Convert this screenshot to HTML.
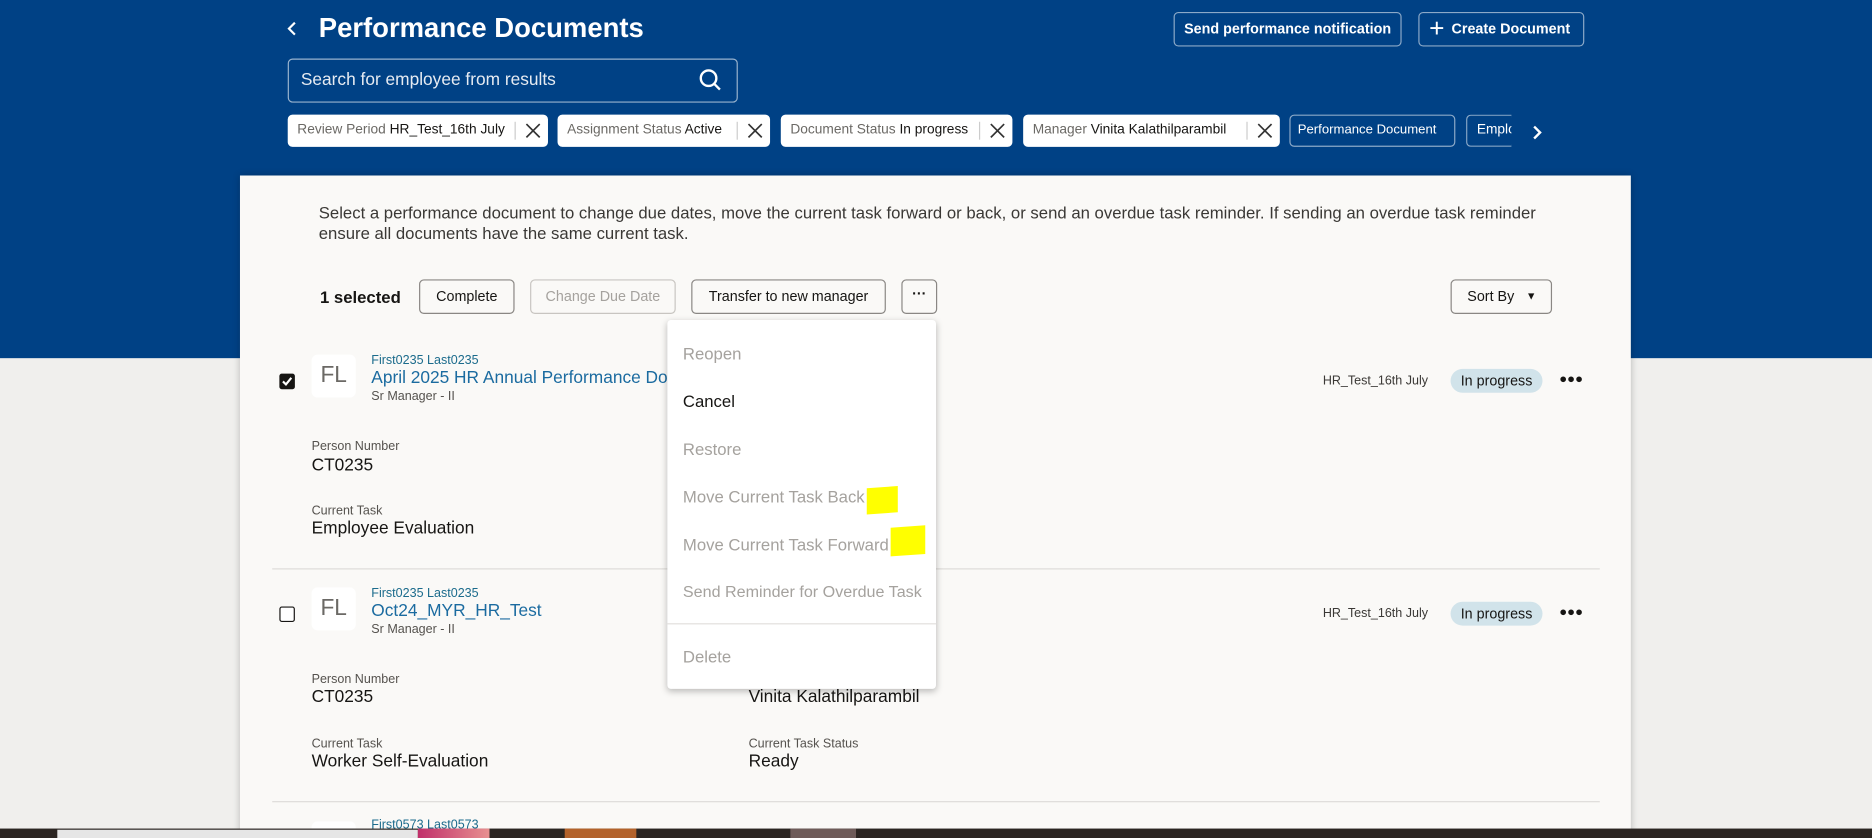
<!DOCTYPE html>
<html><head><meta charset="utf-8"><style>
html,body{margin:0;padding:0;width:1872px;height:838px;overflow:hidden;background:#f0efed;font-family:"Liberation Sans",sans-serif;}
#w{position:absolute;left:0;top:0;width:1568px;height:702px;transform:scale(1.19388);transform-origin:0 0;background:#f0efed;overflow:hidden;}
.a{position:absolute;white-space:nowrap;}
.blue{position:absolute;left:0;top:0;width:1568px;height:300px;background:#004185;}
.card{position:absolute;left:201px;top:147px;width:1165px;height:560px;background:#faf9f7;box-shadow:0 0 6px rgba(0,0,0,.25);}
.hbtn{position:absolute;top:10px;height:29px;border:1px solid rgba(255,255,255,.55);border-radius:4px;color:#fff;font-size:12px;font-weight:bold;line-height:27px;box-sizing:border-box;text-align:center;}
.chip{position:absolute;top:96px;height:27px;background:#fff;border-radius:4px;font-size:11.5px;line-height:27px;padding-left:8px;box-sizing:border-box;color:#161513;overflow:hidden;}
.chip .l{color:#6b6965}
.chip .x{position:absolute;right:6px;top:7px;width:13px;height:13px;}
.chip .sep{position:absolute;top:6px;width:1px;height:15px;background:#ccc;}
.ochip{position:absolute;top:96px;height:27px;border:1px solid rgba(255,255,255,.55);border-radius:4px;color:#fff;font-size:11.5px;line-height:25px;padding:0 8px;box-sizing:border-box;overflow:hidden;}
.btn{position:absolute;top:234px;height:29px;border:1px solid #8a8784;border-radius:4px;background:#faf9f7;font-size:12px;line-height:27px;text-align:center;box-sizing:border-box;color:#161513;}
.lab{font-size:10.5px;color:#55524e;}
.val{font-size:14.5px;color:#161513;}
.mi{position:absolute;left:13px;font-size:14px;color:#a5a29e;}
.pill{position:absolute;width:77px;height:20px;border-radius:10px;background:#d1e3ea;font-size:12px;line-height:20px;text-align:center;color:#161513;}
.dots{position:absolute;font-size:11px;font-weight:bold;letter-spacing:0px;color:#161513;}
.av{position:absolute;left:261px;width:37px;height:36px;background:#fff;border-radius:5px;font-size:19px;color:#6b6965;text-align:center;line-height:36px;}
.nm{font-size:10.5px;color:#1b6b8c;}
.tt{font-size:14.5px;color:#1b6ba0;}
</style></head><body><div id="w">
<div class="blue"></div>
<div class="card"></div>
<svg class="a" style="left:238px;top:16px" width="14" height="16" viewBox="0 0 14 16"><path d="M9 3 L4 8 L9 13" stroke="#fff" stroke-width="1.8" fill="none"/></svg>
<div class="a" style="left:267px;top:10px;font-size:23px;font-weight:bold;color:#fff;">Performance Documents</div>
<div class="hbtn" style="left:983px;width:191px;">Send performance notification</div>
<div class="hbtn" style="left:1188px;width:139px;padding-left:16px;"><span style="position:absolute;left:8px;top:-1px;font-size:22px;font-weight:normal">+</span>Create Document</div>
<div class="a" style="left:241px;top:49px;width:377px;height:37px;border:1px solid rgba(255,255,255,.6);border-radius:4px;box-sizing:border-box;"></div>
<div class="a" style="left:252px;top:59px;font-size:14.5px;color:#e6ebf2;">Search for employee from results</div>
<svg class="a" style="left:585px;top:57px" width="20" height="20" viewBox="0 0 20 20"><circle cx="8.5" cy="8.5" r="6.5" stroke="#fff" stroke-width="2" fill="none"/><path d="M13 13 L18 18" stroke="#fff" stroke-width="2"/></svg>

<div class="chip" style="left:241px;width:218px;"><span class="l">Review Period</span> HR_Test_16th July<span class="sep" style="right:27px"></span><svg class="x" viewBox="0 0 14 14"><path d="M1 1L13 13M13 1L1 13" stroke="#333" stroke-width="1.5"/></svg></div>
<div class="chip" style="left:467px;width:178px;"><span class="l">Assignment Status</span> Active<span class="sep" style="right:27px"></span><svg class="x" viewBox="0 0 14 14"><path d="M1 1L13 13M13 1L1 13" stroke="#333" stroke-width="1.5"/></svg></div>
<div class="chip" style="left:654px;width:194px;"><span class="l">Document Status</span> In progress<span class="sep" style="right:27px"></span><svg class="x" viewBox="0 0 14 14"><path d="M1 1L13 13M13 1L1 13" stroke="#333" stroke-width="1.5"/></svg></div>
<div class="chip" style="left:857px;width:215px;"><span class="l">Manager</span> Vinita Kalathilparambil<span class="sep" style="right:27px"></span><svg class="x" viewBox="0 0 14 14"><path d="M1 1L13 13M13 1L1 13" stroke="#333" stroke-width="1.5"/></svg></div>
<div class="ochip" style="left:1080px;width:139px;padding:0 6px;font-size:11px;">Performance Document</div>
<div class="ochip" style="left:1228px;width:38px;border-right:none;border-radius:4px 0 0 4px;">Employee</div>
<svg class="a" style="left:1281px;top:103px" width="12" height="16" viewBox="0 0 12 16"><path d="M4 3 L9 8 L4 13" stroke="#fff" stroke-width="2" fill="none"/></svg>

<div class="a" style="left:267px;top:170px;font-size:14px;color:#3a3835;line-height:17px;">Select a performance document to change due dates, move the current task forward or back, or send an overdue task reminder. If sending an overdue task reminder<br>ensure all documents have the same current task.</div>
<div class="a" style="left:268px;top:241px;font-size:14px;font-weight:bold;color:#161513;">1 selected</div>
<div class="btn" style="left:351px;width:80px;">Complete</div>
<div class="btn" style="left:444px;width:122px;color:#a5a29e;border-color:#c8c5c1;">Change Due Date</div>
<div class="btn" style="left:579px;width:163px;">Transfer to new manager</div>
<div class="btn" style="left:755px;width:30px;font-weight:bold;line-height:22px;">···</div>
<div class="btn" style="left:1215px;width:85px;text-align:left;padding-left:13px;">Sort By <span style="position:absolute;right:12px;font-size:9px">▼</span></div>

<!-- row 1 -->
<div class="a" style="left:234px;top:313px;width:13px;height:13px;background:#161513;border-radius:2px;"><svg width="13" height="13" viewBox="0 0 13 13" style="position:absolute"><path d="M3 6.5 L5.5 9 L10 3.5" stroke="#fff" stroke-width="1.8" fill="none"/></svg></div>
<div class="av" style="top:297px;">FL</div>
<div class="a nm" style="left:311px;top:296px;">First0235 Last0235</div>
<div class="a tt" style="left:311px;top:309px;">April 2025 HR Annual Performance Document</div>
<div class="a" style="left:311px;top:326px;font-size:10.5px;color:#55524e;">Sr Manager - II</div>
<div class="a" style="left:1108px;top:313px;font-size:10.5px;color:#3a3835;">HR_Test_16th July</div>
<div class="pill" style="left:1215px;top:309px;">In progress</div>
<div class="dots" style="left:1306px;top:312px;">●●●</div>
<div class="a lab" style="left:261px;top:368px;">Person Number</div>
<div class="a val" style="left:261px;top:382px;">CT0235</div>
<div class="a lab" style="left:261px;top:422px;">Current Task</div>
<div class="a val" style="left:261px;top:435px;">Employee Evaluation</div>
<div class="a" style="left:228px;top:476px;width:1112px;height:1px;background:#dedcd9;"></div>

<!-- row 2 -->
<div class="a" style="left:234px;top:508px;width:11px;height:11px;border:1px solid #161513;border-radius:2px;background:#fff;"></div>
<div class="av" style="top:492px;">FL</div>
<div class="a nm" style="left:311px;top:491px;">First0235 Last0235</div>
<div class="a tt" style="left:311px;top:504px;">Oct24_MYR_HR_Test</div>
<div class="a" style="left:311px;top:521px;font-size:10.5px;color:#55524e;">Sr Manager - II</div>
<div class="a" style="left:1108px;top:508px;font-size:10.5px;color:#3a3835;">HR_Test_16th July</div>
<div class="pill" style="left:1215px;top:504px;">In progress</div>
<div class="dots" style="left:1306px;top:507px;">●●●</div>
<div class="a lab" style="left:261px;top:563px;">Person Number</div>
<div class="a val" style="left:261px;top:576px;">CT0235</div>
<div class="a val" style="left:627px;top:576px;">Vinita Kalathilparambil</div>
<div class="a lab" style="left:261px;top:617px;">Current Task</div>
<div class="a val" style="left:261px;top:630px;">Worker Self-Evaluation</div>
<div class="a lab" style="left:627px;top:617px;">Current Task Status</div>
<div class="a val" style="left:627px;top:630px;">Ready</div>
<div class="a" style="left:228px;top:671px;width:1112px;height:1px;background:#dedcd9;"></div>
<div class="av" style="top:688px;"></div>
<div class="a nm" style="left:311px;top:685px;">First0573 Last0573</div>

<!-- menu -->
<div class="a" style="left:559px;top:268px;width:225px;height:309px;background:#fff;border-radius:3px;box-shadow:0 2px 6px rgba(0,0,0,.25);">
<div class="mi" style="top:20px;">Reopen</div>
<div class="mi" style="top:60px;color:#161513;">Cancel</div>
<div class="mi" style="top:100px;">Restore</div>
<div class="mi" style="top:140px;">Move Current Task Back</div>
<div class="mi" style="top:180px;">Move Current Task Forward</div>
<div class="mi" style="top:220px;font-size:13.5px;">Send Reminder for Overdue Task</div>
<div style="position:absolute;left:0;top:254px;width:225px;height:1px;background:#e2e0dd;"></div>
<div class="mi" style="top:274px;">Delete</div>
</div>
<div class="a" style="left:726px;top:408px;width:26px;height:22px;background:#ffff00;transform:skewY(-4deg);"></div>
<div class="a" style="left:746px;top:441px;width:29px;height:24px;background:#ffff00;transform:skewY(-4deg);"></div>

<!-- taskbar -->
<div class="a" style="left:0;top:694px;width:1568px;height:8px;background:#2b2522;"></div>
<div class="a" style="left:48px;top:695px;width:302px;height:7px;background:#e6e6e6;"></div>
<div class="a" style="left:350px;top:694px;width:60px;height:8px;background:linear-gradient(90deg,#c0306a,#e89090);"></div>
<div class="a" style="left:473px;top:694px;width:60px;height:8px;background:#b3622b;"></div>
<div class="a" style="left:662px;top:694px;width:55px;height:8px;background:#6e5b59;"></div>
</div></body></html>
